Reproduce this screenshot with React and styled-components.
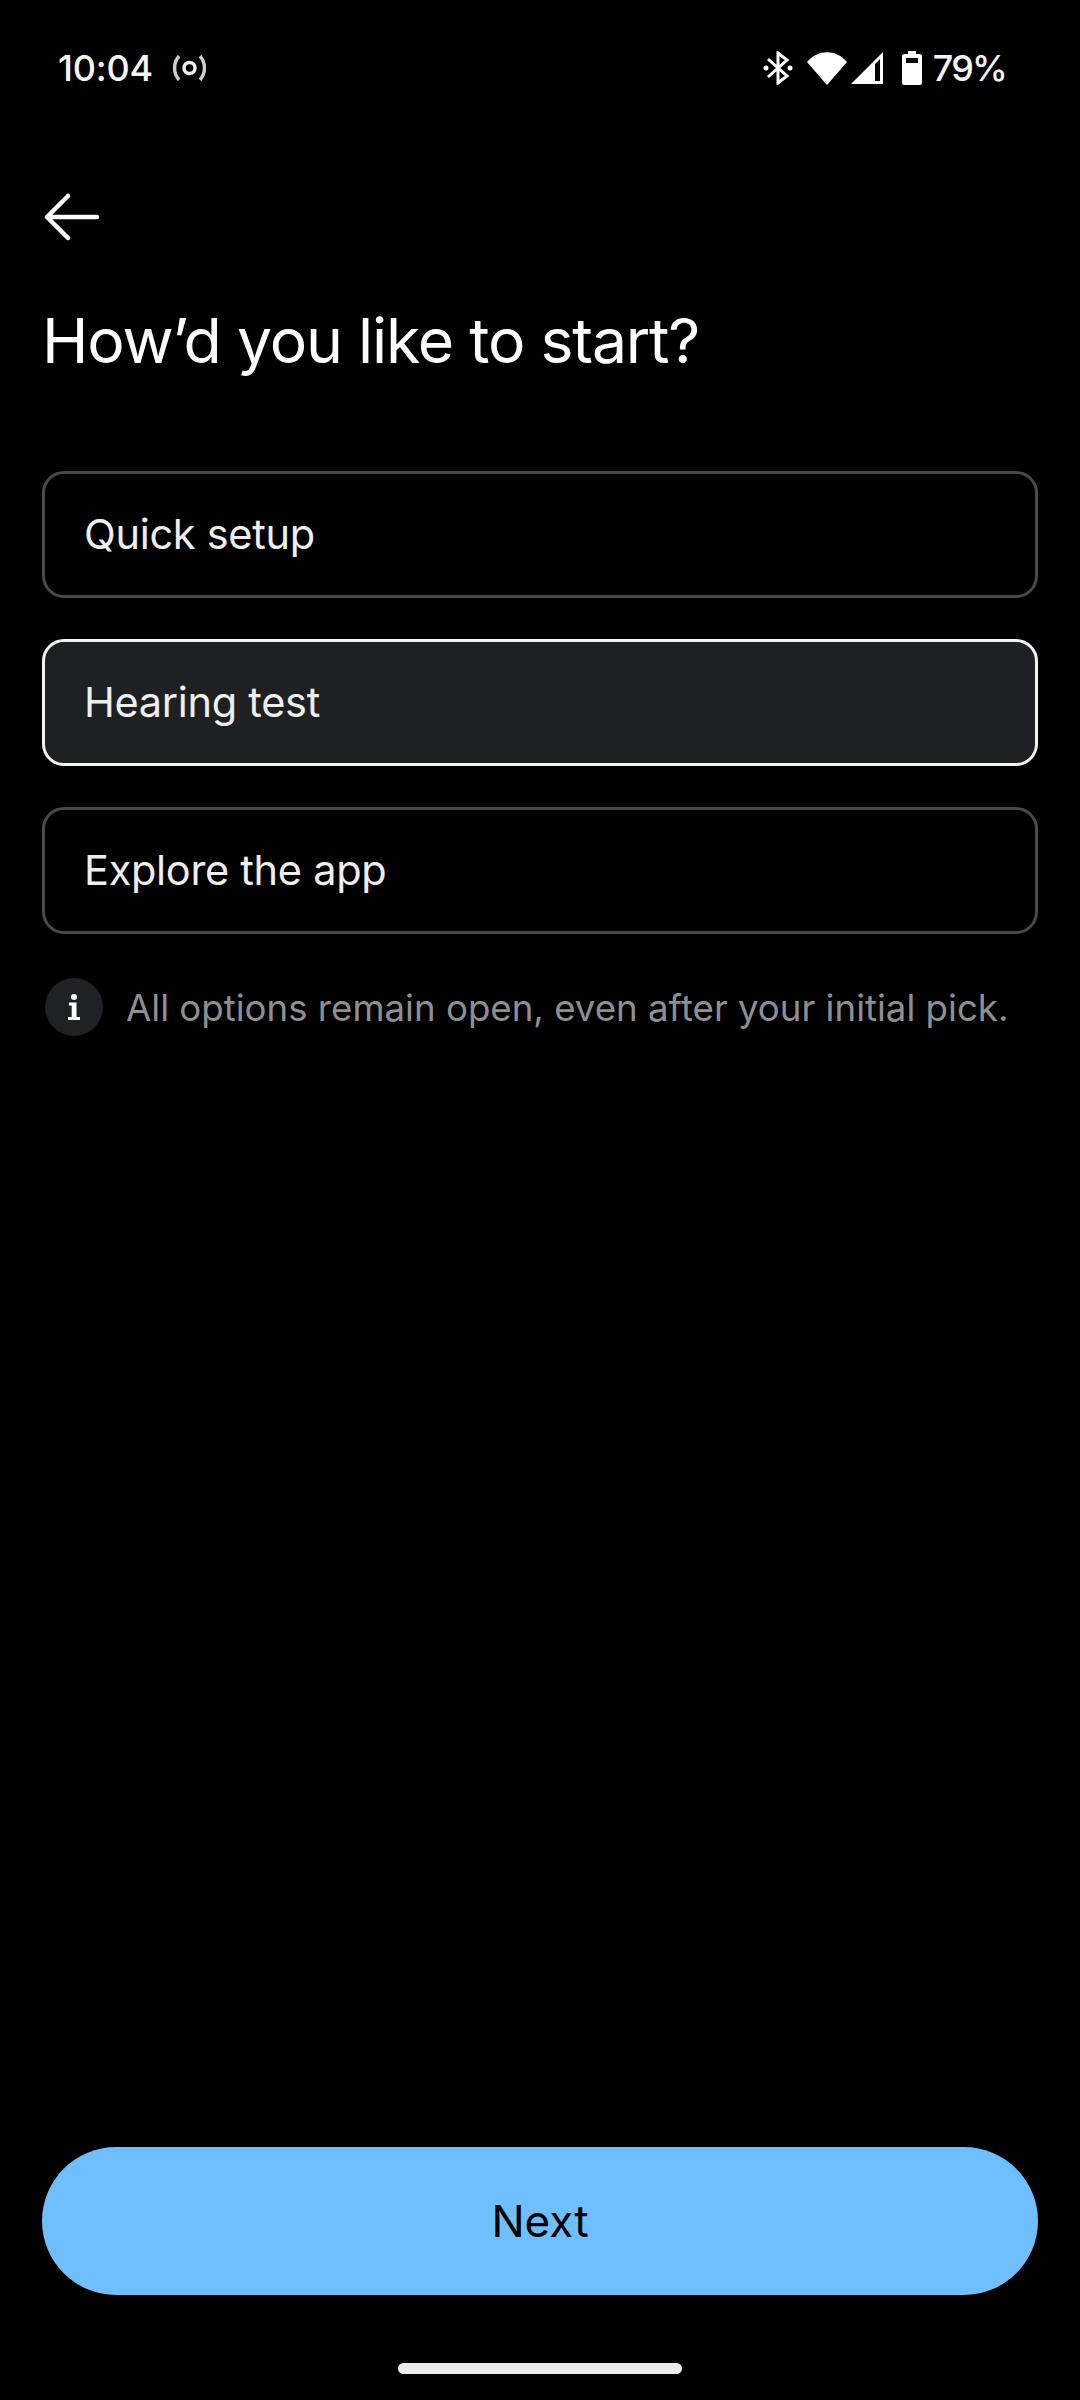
import React from "react";
import styled, { createGlobalStyle } from "styled-components";

const Global = createGlobalStyle`
  html, body { margin: 0; padding: 0; background: #000; }
  body { font-family: Inter, "Noto Sans", sans-serif; }
  * { box-sizing: border-box; }
`;

const Screen = styled.div`
  width: 1080px;
  height: 2400px;
  background: #000;
  color: #fff;
  display: flex;
  flex-direction: column;
`;

const StatusBar = styled.div`
  height: 136px;
  padding: 0 74px 0 58px;
  display: flex;
  align-items: center;
  justify-content: space-between;
`;

const StatusGroup = styled.div`
  display: flex;
  align-items: center;
`;

const Clock = styled.span`
  font-size: 36px;
  font-weight: 500;
  letter-spacing: -0.2px;
  color: #f4f4f4;
`;

const Percent = styled.span`
  font-size: 36px;
  font-weight: 500;
  letter-spacing: -1.8px;
  margin-left: 11px;
  color: #f4f4f4;
`;

const BackRow = styled.div`
  height: 64px;
  padding-left: 44px;
  margin-top: 49px;
  display: flex;
  align-items: center;
`;

const Title = styled.h1`
  margin: 53px 0 0 42px;
  font-size: 62.5px;
  line-height: 76px;
  font-weight: 400;
  letter-spacing: -1.2px;
`;

const Options = styled.div`
  margin: 93px 42px 0;
  display: flex;
  flex-direction: column;
  gap: 41px;
`;

const Option = styled.div`
  height: 127px;
  padding: 0 39px 2px;
  display: flex;
  align-items: center;
  font-size: 41.5px;
  font-weight: 400;
  letter-spacing: -0.3px;
  color: #eeeeee;
  border-radius: 22px;
  border: 3px solid ${(p) => (p.$selected ? "#f2f2f2" : "#48494b")};
  background: ${(p) => (p.$selected ? "#1f2023" : "transparent")};
`;

const Note = styled.div`
  margin: 44px 0 0 45px;
  display: flex;
  align-items: center;
  gap: 23px;
  font-size: 36.65px;
  font-weight: 400;
  color: #8e8f92;
`;

const InfoBadge = styled.div`
  width: 58px;
  height: 58px;
  border-radius: 50%;
  background: #202124;
  display: flex;
  align-items: center;
  justify-content: center;
  flex: none;
`;

const Spacer = styled.div`
  flex: 1;
`;

const NextButton = styled.button`
  margin: 0 42px;
  height: 148px;
  border: 0;
  border-radius: 74px;
  background: #6fbfff;
  color: #000;
  font-family: inherit;
  font-size: 44px;
  font-weight: 400;
`;

const HomeArea = styled.div`
  height: 105px;
  padding-top: 68px;
  display: flex;
  justify-content: center;
`;

const HomeBar = styled.div`
  width: 284px;
  height: 11px;
  border-radius: 6px;
  background: #ececec;
`;

const Hotspot = () => (
  <svg width="33" height="26" viewBox="0 0 33 26" fill="none" style={{ marginLeft: 20 }}>
    <circle cx="16.5" cy="13" r="5.5" stroke="#eee" strokeWidth="3.5" />
    <path d="M6 1C0 8 0 18 6 25M27 1C33 8 33 18 27 25" stroke="#ccc" strokeWidth="3.5" />
  </svg>
);

const Bluetooth = () => (
  <svg width="30" height="34" viewBox="0 0 30 34" fill="none">
    <path d="M5 8L24 25L15 32V2L24 9L5 26" stroke="#fff" strokeWidth="3" />
    <circle cx="3" cy="17" r="2.5" fill="#fff" />
    <circle cx="27" cy="17" r="2.5" fill="#fff" />
  </svg>
);

const Wifi = () => (
  <svg width="40" height="33" viewBox="0 0 40 33" style={{ marginLeft: 14 }}>
    <path d="M0 10C11 -3 29 -3 40 10L20 33Z" fill="#fff" />
  </svg>
);

const Signal = () => (
  <svg width="32" height="32" viewBox="0 0 32 32" style={{ marginLeft: 4 }}>
    <path fillRule="evenodd" d="M0 32L32 0V32ZM24 12V29H29V7Z" fill="#fff" />
  </svg>
);

const Battery = () => (
  <svg width="20" height="34" viewBox="0 0 20 34" style={{ marginLeft: 19 }}>
    <path
      fillRule="evenodd"
      d="M6 0H14V3H18C19 3 20 4 20 5V32C20 33 19 34 18 34H2C1 34 0 33 0 32V5C0 4 1 3 2 3H6ZM4 7V12H16V7Z"
      fill="#fff"
    />
  </svg>
);

const BackArrow = () => (
  <svg width="56" height="50" viewBox="0 0 56 50" fill="none">
    <path d="M3 25H53M24 4L3 25L24 46" stroke="#fff" strokeWidth="4.5" strokeLinecap="round" strokeLinejoin="round" />
  </svg>
);

const InfoIcon = () => (
  <svg width="12" height="26" viewBox="0 0 12 26">
    <circle cx="6" cy="3" r="3" fill="#fff" />
    <path d="M1 8.5H8.5V23H12V26H0V23H3.7V11.5H1Z" fill="#fff" />
  </svg>
);

export default function App() {
  return (
    <>
      <Global />
      <Screen>
        <StatusBar>
          <StatusGroup>
            <Clock>10:04</Clock>
            <Hotspot />
          </StatusGroup>
          <StatusGroup>
            <Bluetooth />
            <Wifi />
            <Signal />
            <Battery />
            <Percent>79%</Percent>
          </StatusGroup>
        </StatusBar>
        <BackRow>
          <BackArrow />
        </BackRow>
        <Title>How’d you like to start?</Title>
        <Options>
          <Option>Quick setup</Option>
          <Option $selected>Hearing test</Option>
          <Option>Explore the app</Option>
        </Options>
        <Note>
          <InfoBadge>
            <InfoIcon />
          </InfoBadge>
          All options remain open, even after your initial pick.
        </Note>
        <Spacer />
        <NextButton>Next</NextButton>
        <HomeArea>
          <HomeBar />
        </HomeArea>
      </Screen>
    </>
  );
}
